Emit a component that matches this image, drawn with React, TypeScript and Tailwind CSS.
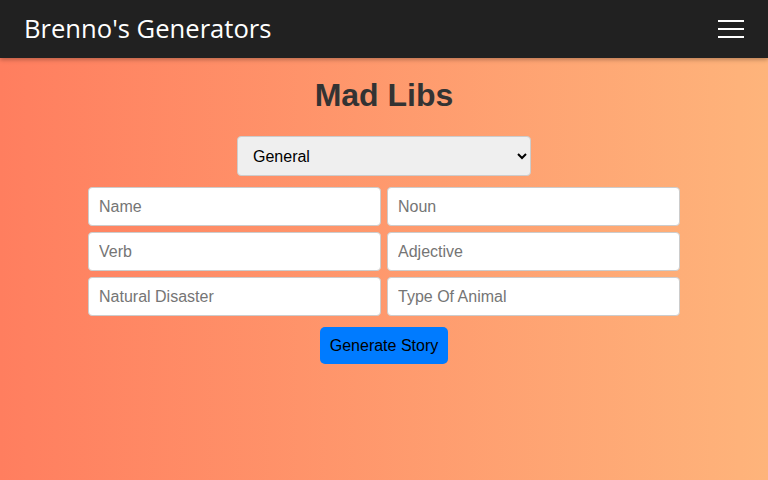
import { useState } from "react";

const fields = [
  ["Name", "Noun"],
  ["Verb", "Adjective"],
  ["Natural Disaster", "Type Of Animal"],
];

export default function App() {
  const [genre, setGenre] = useState("general");

  return (
    <div className="min-h-[480px] bg-[linear-gradient(to_right,#ff7e5f,#feb47b)] font-['Liberation_Sans',Arial,sans-serif]">
      {/* Top bar */}
      <nav className="relative z-10 flex h-[58px] items-center justify-between bg-[#212121] px-6 shadow-[0_2px_4px_rgba(0,0,0,0.25)]">
        <a className="font-['Open_Sans',sans-serif] text-[25.6px] leading-none text-white" href="#">
          Brenno's Generators
        </a>
        <button className="flex w-[26px] flex-col gap-[6px]" aria-label="menu">
          <span className="h-[2px] w-full bg-white" />
          <span className="h-[2px] w-full bg-white" />
          <span className="h-[2px] w-full bg-white" />
        </button>
      </nav>

      <main className="flex flex-col items-center pt-[18px]">
        <h1 className="text-[32px] font-bold leading-[38px] text-[#333]">Mad Libs</h1>

        <select
          value={genre}
          onChange={(e) => setGenre(e.target.value)}
          className="mt-[22px] h-10 w-[294px] rounded border border-[#ccc] bg-[#efefef] px-[11px] text-base text-black"
        >
          <option value="general">General</option>
          <option value="fantasy">Fantasy</option>
          <option value="scifi">Sci-Fi</option>
        </select>

        <div className="mt-[11px] grid w-[592px] grid-cols-2 gap-[6px]">
          {fields.flat().map((f) => (
            <input
              key={f}
              placeholder={f}
              className="h-[39px] rounded border border-[#ccc] bg-white px-[10px] text-base text-black placeholder:text-[#757575]"
            />
          ))}
        </div>

        <button className="mt-[11px] h-[37px] rounded-[5px] bg-[#007bff] px-[10px] text-base text-black">
          Generate Story
        </button>
      </main>
    </div>
  );
}
